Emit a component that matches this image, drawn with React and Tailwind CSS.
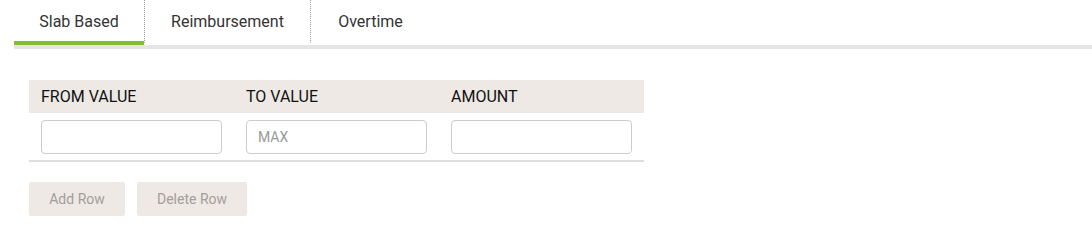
import React, { useState } from 'react';

const tabs = [
  { label: 'Slab Based', w: 'w-[130px]' },
  { label: 'Reimbursement', w: 'w-[166px]' },
  { label: 'Overtime', w: 'w-[120px]' },
];

const App = () => {
  const [active, setActive] = useState(0);

  return (
    <div className="w-[1092px] h-[237px] bg-white font-['Roboto',sans-serif] text-[#333]">
      {/* tabs */}
      <div className="pl-[14px] flex">
        {tabs.map((t, i) => (
          <button
            key={t.label}
            onClick={() => setActive(i)}
            className={`${t.w} h-[45px] text-[16px] text-center pt-[3px] ${
              i === active ? 'border-b-4 border-[#84bb37]' : 'border-b-4 border-transparent'
            } ${i > 0 ? 'border-l border-l-[#999] border-dotted' : ''}`}
          >
            {t.label}
          </button>
        ))}
      </div>
      <div className="h-[4px] ml-[14px] bg-[#e5e5e5]" />

      <div className="pl-[29px] pt-[31px]">
        <div className="w-[615px] border-b-2 border-[#dedede]">
          <div className="grid grid-cols-3 h-[33px] bg-[#eee9e5] items-center">
            <div className="pl-[12px] text-[16px] text-[#111]">FROM VALUE</div>
            <div className="pl-[12px] text-[16px] text-[#111]">TO VALUE</div>
            <div className="pl-[12px] text-[16px] text-[#111]">AMOUNT</div>
          </div>
          <div className="grid grid-cols-3 pt-[7px] pb-[6px]">
            <div className="px-[12px]">
              <input className="w-[181px] h-[34px] border border-[#ccc] rounded-[4px] px-[11px] text-[14px] outline-none" />
            </div>
            <div className="px-[12px]">
              <input
                placeholder="MAX"
                className="w-[181px] h-[34px] border border-[#ccc] rounded-[4px] px-[11px] text-[14px] outline-none placeholder:text-[#999]"
              />
            </div>
            <div className="px-[12px]">
              <input className="w-[181px] h-[34px] border border-[#ccc] rounded-[4px] px-[11px] text-[14px] outline-none" />
            </div>
          </div>
        </div>

        <div className="flex gap-[12px] mt-[20px]">
          <button className="w-[96px] h-[34px] bg-[#eee9e5] rounded-[2px] text-[14px] text-[#a39e9a]">Add Row</button>
          <button className="w-[110px] h-[34px] bg-[#eee9e5] rounded-[2px] text-[14px] text-[#a39e9a]">Delete Row</button>
        </div>
      </div>
    </div>
  );
};

export default App;
